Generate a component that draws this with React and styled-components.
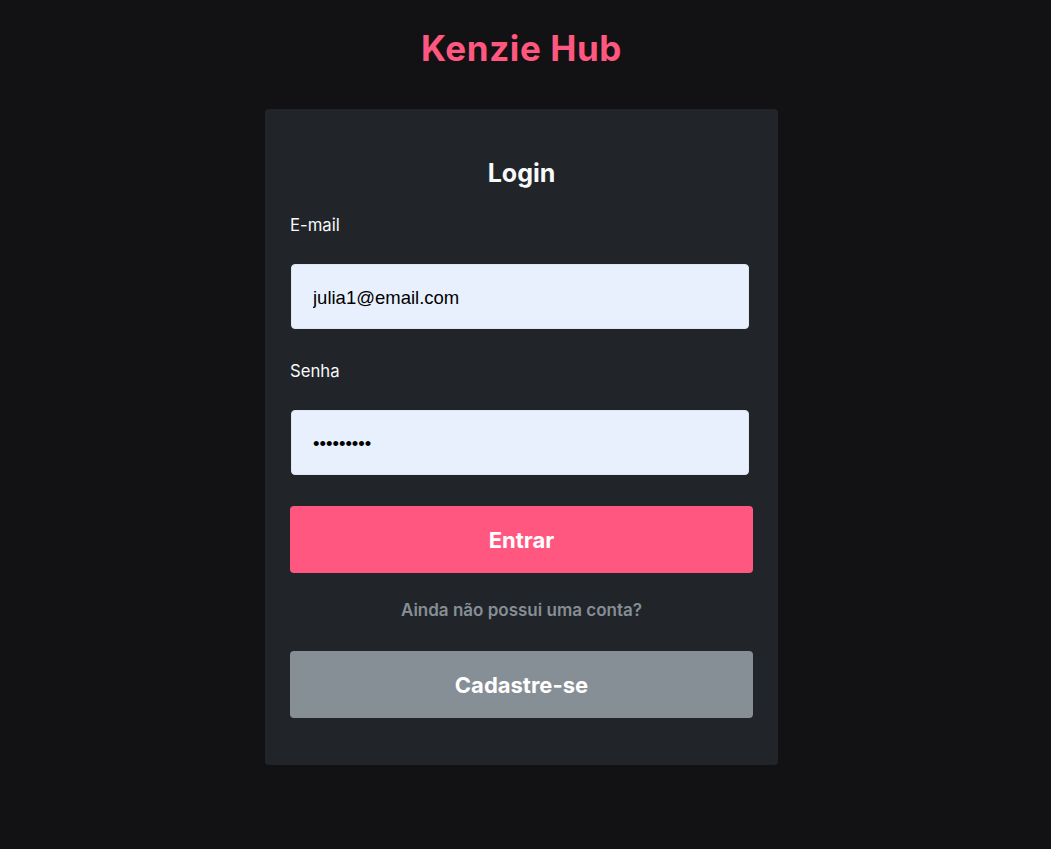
import React from "react";
import styled, { createGlobalStyle } from "styled-components";

const GlobalStyle = createGlobalStyle`
  * {
    box-sizing: border-box;
  }
  body {
    margin: 0;
    background-color: #121214;
    font-family: Inter, "Noto Sans", sans-serif;
  }
`;

function App() {
  return (
    <>
      <GlobalStyle />
      <Page>
        <Logo>Kenzie Hub</Logo>
        <Card>
          <Title>Login</Title>
          <Label htmlFor="email">E-mail</Label>
          <Input id="email" type="email" defaultValue="julia1@email.com" />
          <Label htmlFor="password" $top={32}>
            Senha
          </Label>
          <Input id="password" type="password" defaultValue="123456789" />
          <Button $color="#FF577F" $top={31}>
            Entrar
          </Button>
          <Hint>Ainda não possui uma conta?</Hint>
          <Button $color="#868E96" $top={31}>
            Cadastre-se
          </Button>
        </Card>
      </Page>
    </>
  );
}

const Page = styled.div`
  min-height: 849px;
  display: flex;
  flex-direction: column;
  align-items: center;
  padding: 27px 8px 0 0;
`;

const Logo = styled.h1`
  margin: 0 0 40px;
  height: 42px;
  line-height: 42px;
  font-size: 35px;
  font-weight: 700;
  letter-spacing: 0.6px;
  color: #ff577f;
`;

const Card = styled.div`
  width: 513px;
  background-color: #212529;
  border-radius: 4px;
  padding: 48px 25px 47px;
  display: flex;
  flex-direction: column;
`;

const Title = styled.h2`
  margin: 0;
  height: 32px;
  line-height: 32px;
  font-size: 25px;
  font-weight: 700;
  color: #f8f9fa;
  text-align: center;
`;

const Label = styled.label`
  margin-top: ${(p) => p.$top || 26}px;
  height: 20px;
  line-height: 20px;
  font-size: 16.7px;
  color: #f8f9fa;
`;

const Input = styled.input`
  margin-top: 29px;
  width: calc(100% - 5px);
  height: 65px;
  margin-left: 1px;
  padding: 3px 21px 0;
  border: 1px solid #dfe6f2;
  border-radius: 4px;
  background-color: #e8f0fe;
  color: #000;
  font-family: "Liberation Sans", Arial, sans-serif;
  font-size: 18.5px;
  outline: none;
`;

const Button = styled.button`
  margin-top: ${(p) => p.$top}px;
  height: 67px;
  width: 100%;
  border: none;
  border-radius: 4px;
  background-color: ${(p) => p.$color};
  color: #fff;
  font-family: Inter, "Noto Sans", sans-serif;
  font-size: 22px;
  font-weight: 700;
  cursor: pointer;
`;

const Hint = styled.p`
  margin: 27px 0 0;
  height: 20px;
  line-height: 20px;
  font-size: 17px;
  font-weight: 600;
  color: #868e96;
  text-align: center;
`;

export default App;
